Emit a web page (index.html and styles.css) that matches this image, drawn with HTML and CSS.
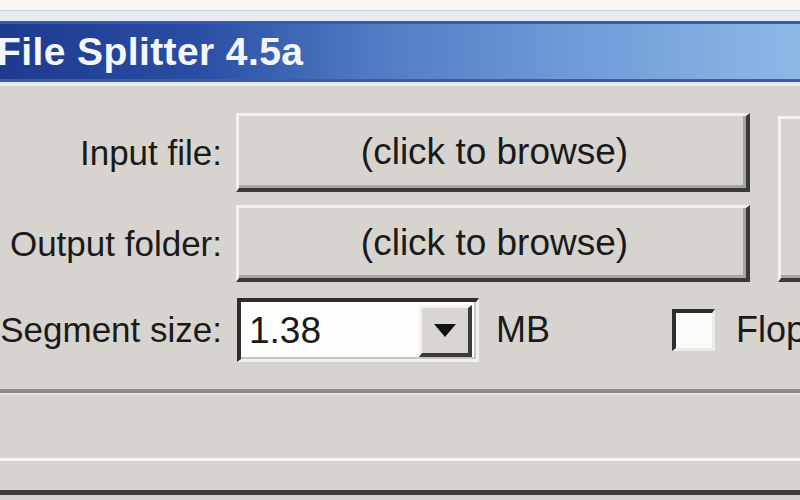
FILE: index.html
```html
<!DOCTYPE html>
<html>
<head>
<meta charset="utf-8">
<link rel="stylesheet" href="styles.css">
</head>
<body>
<div class="window">
  <div class="edge-top"></div>
  <div class="titlebar"><span class="title">File Splitter 4.5a</span></div>
  <div class="edge-under"></div>
  <div class="client">
    <div class="form">
      <div class="label">Input file:</div>
      <div class="btn browse">(click to browse)</div>
      <div class="btn side"></div>
      <div class="label">Output folder:</div>
      <div class="btn browse">(click to browse)</div>
      <div class="label seg">Segment size:</div>
      <div class="row3">
        <div class="combo">
          <span class="combo-text">1.38</span>
          <span class="combo-btn">
            <svg width="22" height="13" viewBox="0 0 22 13"><path d="M0 0H22L11 13Z" fill="#111"/></svg>
          </span>
        </div>
        <span class="unit">MB</span>
        <span class="check"></span>
        <span class="check-label">Floppy</span>
      </div>
    </div>
    <div class="groove"></div>
    <div class="panel"></div>
  </div>
</div>
</body>
</html>
```

FILE: styles.css
```css
html, body {
  margin: 0;
  padding: 0;
}
body {
  width: 800px;
  height: 500px;
  overflow: hidden;
  background: #d7d4d0;
  font-family: "Liberation Sans", Arial, sans-serif;
  color: #1a1a1a;
}
.window {
  display: flex;
  flex-direction: column;
  overflow: hidden;
}
.edge-top {
  height: 11px;
  background: #f7f6f3;
  border-bottom: 10px solid #e7ecf4;
  box-shadow: inset 0 -1px 0 #cfd2d8;
}
.titlebar {
  height: 61px;
  display: flex;
  align-items: center;
  background: linear-gradient(to right, #1d3a8f 0%, #2a4ea5 25%, #4f7cc4 47%, #6f9bd8 72%, #8db9e8 100%);
  box-shadow: inset 0 3px 0 #3e5a9e, inset 0 -3px 0 #3c5ea6;
}
.title {
  margin-left: -3px;
  font-family: "Liberation Sans", Arial, sans-serif;
  font-weight: bold;
  font-size: 39px;
  letter-spacing: 0.4px;
  color: #f4f6fa;
}
.edge-under {
  height: 4px;
  background: #e6e9ee;
}
.client {
  display: flex;
  flex-direction: column;
}
.form {
  display: grid;
  grid-template-columns: 222px 514px 1fr;
  grid-template-rows: 79px 77px 67px;
  column-gap: 14px;
  row-gap: 13px;
  padding-top: 27px;
}
.label {
  font-size: 35px;
  text-align: right;
  align-self: center;
  white-space: nowrap;
}
.seg {
  padding-top: 3px;
}
.btn {
  box-sizing: border-box;
  background: #d7d4d0;
  border-top: 3px solid #f4f3f1;
  border-left: 3px solid #f4f3f1;
  border-right: 4px solid #3a3a3a;
  border-bottom: 4px solid #3a3a3a;
  box-shadow: inset -3px -3px 0 #a9a6a2;
}
.browse {
  display: flex;
  align-items: center;
  justify-content: center;
  font-size: 37px;
  padding-left: 4px;
}
.side {
  grid-column: 3;
  grid-row: 1 / span 2;
  margin-left: 14px;
  margin-top: 3px;
  width: 60px;
}
.row3 {
  grid-column: 2 / span 2;
  display: flex;
  align-items: center;
  align-self: end;
  white-space: nowrap;
  min-width: 0;
  overflow: hidden;
}
.row3 > * {
  flex-shrink: 0;
}
.combo {
  box-sizing: border-box;
  width: 242px;
  height: 64px;
  display: flex;
  align-items: center;
  background: #fdfdfc;
  border-top: 4px solid #2e2e2e;
  border-left: 4px solid #2e2e2e;
  border-right: 3px solid #f2f1ef;
  border-bottom: 3px solid #f2f1ef;
  box-shadow: inset -2px -2px 0 #c8c6c2;
  padding: 2px 4px 2px 8px;
  margin-left: 1px;
}
.combo-text {
  flex: 1;
  font-size: 37px;
}
.combo-btn {
  box-sizing: border-box;
  width: 53px;
  height: 52px;
  display: flex;
  align-items: center;
  justify-content: center;
  background: #d9d6d2;
  border-top: 3px solid #f4f3f1;
  border-left: 3px solid #f4f3f1;
  border-right: 4px solid #3a3a3a;
  border-bottom: 4px solid #3a3a3a;
}
.unit {
  font-size: 36px;
  margin-left: 17px;
}
.check {
  box-sizing: border-box;
  width: 43px;
  height: 42px;
  margin-left: 122px;
  background: #fbfbfa;
  border-top: 4px solid #2e2e2e;
  border-left: 4px solid #2e2e2e;
  border-right: 3px solid #ecebe8;
  border-bottom: 3px solid #ecebe8;
}
.check-label {
  font-size: 36px;
  margin-left: 21px;
}
.groove {
  margin-top: 27px;
  height: 4px;
  background: #8d8b89;
  border-bottom: 2px solid #e6e4e1;
}
.panel {
  margin-top: 63px;
  height: 29px;
  border-top: 3px solid #f7f6f3;
  border-bottom: 5px solid #3e3e3e;
  background: #d7d4d0;
}
```
